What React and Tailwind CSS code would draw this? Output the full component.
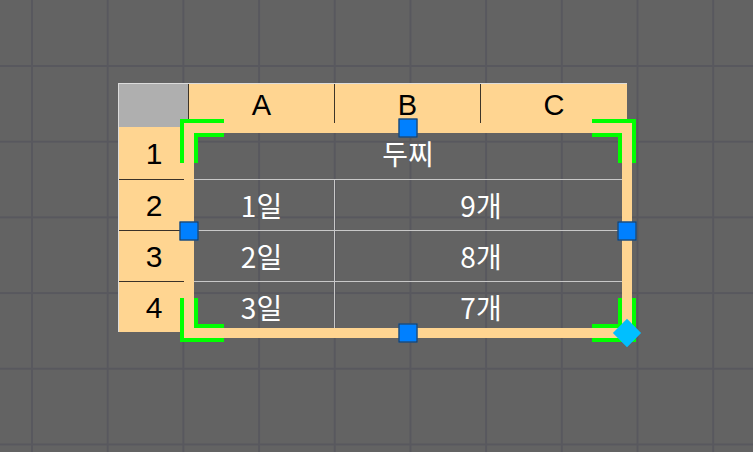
export default function App() {
  const rows = [
    ['1일', '9개'],
    ['2일', '8개'],
    ['3일', '7개'],
  ]

  return (
    <div className="w-[753px] h-[452px] overflow-hidden bg-[#636363] bg-[linear-gradient(to_right,#58585e_2px,transparent_2px),linear-gradient(to_bottom,#58585e_2px,transparent_2px)] bg-[size:75.7px_75.7px] bg-[position:31px_65px] pl-[118px] pt-[83px]">
      <div className="relative w-[509px] border-l border-t border-[#dcdcdc]">
        {/* sheet */}
        <div className="grid grid-cols-[70px_146px_146px_146px] grid-rows-[43px_52px_51px_51px_51px] font-['Liberation_Sans',sans-serif] text-[29px] text-black">
          <div className="bg-[#afafaf] border-r border-[#3d3428]" />
          <div className="flex items-center justify-center bg-[#ffd591] border-r border-[#3d3428]">A</div>
          <div className="flex items-center justify-center bg-[#ffd591] border-r border-[#3d3428]">B</div>
          <div className="flex items-center justify-center bg-[#ffd591]">C</div>

          <div className="flex items-center justify-center bg-[#ffd591] text-[30px]">1</div>
          <div className="col-span-3 flex items-center justify-center font-['Noto_Sans_CJK_KR','Noto_Sans',sans-serif] text-[28px] text-white">
            두찌
          </div>

          {rows.map(([day, count], i) => (
            <div key={day} className="contents">
              <div className="flex items-center justify-center bg-[#ffd591] border-t border-[#3a3128] text-[30px]">{i + 2}</div>
              <div className="flex items-center justify-center border-t border-r border-[#c8c8c8] font-['Noto_Sans_CJK_KR','Noto_Sans',sans-serif] text-[28px] text-white">
                {day}
              </div>
              <div className="col-span-2 flex items-center justify-center border-t border-[#c8c8c8] font-['Noto_Sans_CJK_KR','Noto_Sans',sans-serif] text-[28px] text-white">
                {count}
              </div>
            </div>
          ))}
        </div>

        {/* selection overlay */}
        <div className="absolute left-[61px] top-[35px] w-[456px] h-[223px]">
          <div className="absolute inset-[4px] border-[10px] border-[#ffd591]" />

          <div className="absolute left-0 top-0 w-[44px] h-[44px] border-l-4 border-t-4 border-[#00ff00]" />
          <div className="absolute left-[14px] top-[14px] w-[30px] h-[30px] border-l-4 border-t-4 border-[#00ff00]" />
          <div className="absolute right-0 top-0 w-[44px] h-[44px] border-r-4 border-t-4 border-[#00ff00]" />
          <div className="absolute right-[14px] top-[14px] w-[30px] h-[30px] border-r-4 border-t-4 border-[#00ff00]" />
          <div className="absolute left-0 bottom-0 w-[44px] h-[44px] border-l-4 border-b-4 border-[#00ff00]" />
          <div className="absolute left-[14px] bottom-[14px] w-[30px] h-[30px] border-l-4 border-b-4 border-[#00ff00]" />
          <div className="absolute right-0 bottom-0 w-[44px] h-[44px] border-r-4 border-b-4 border-[#00ff00]" />
          <div className="absolute right-[14px] bottom-[14px] w-[30px] h-[30px] border-r-4 border-b-4 border-[#00ff00]" />

          <div className="absolute left-1/2 top-[9px] w-[19px] h-[19px] -translate-x-1/2 -translate-y-1/2 bg-[#0080ff] border border-[#2b3440]" />
          <div className="absolute left-1/2 bottom-[9px] w-[19px] h-[19px] -translate-x-1/2 translate-y-1/2 bg-[#0080ff] border border-[#2b3440]" />
          <div className="absolute left-[9px] top-1/2 w-[19px] h-[19px] -translate-x-1/2 -translate-y-1/2 bg-[#0080ff] border border-[#2b3440]" />
          <div className="absolute right-[9px] top-1/2 w-[19px] h-[19px] translate-x-1/2 -translate-y-1/2 bg-[#0080ff] border border-[#2b3440]" />
          <div className="absolute right-[9px] bottom-[9px] w-[20px] h-[20px] translate-x-1/2 translate-y-1/2 rotate-45 bg-[#00bfff]" />
        </div>
      </div>
    </div>
  )
}
